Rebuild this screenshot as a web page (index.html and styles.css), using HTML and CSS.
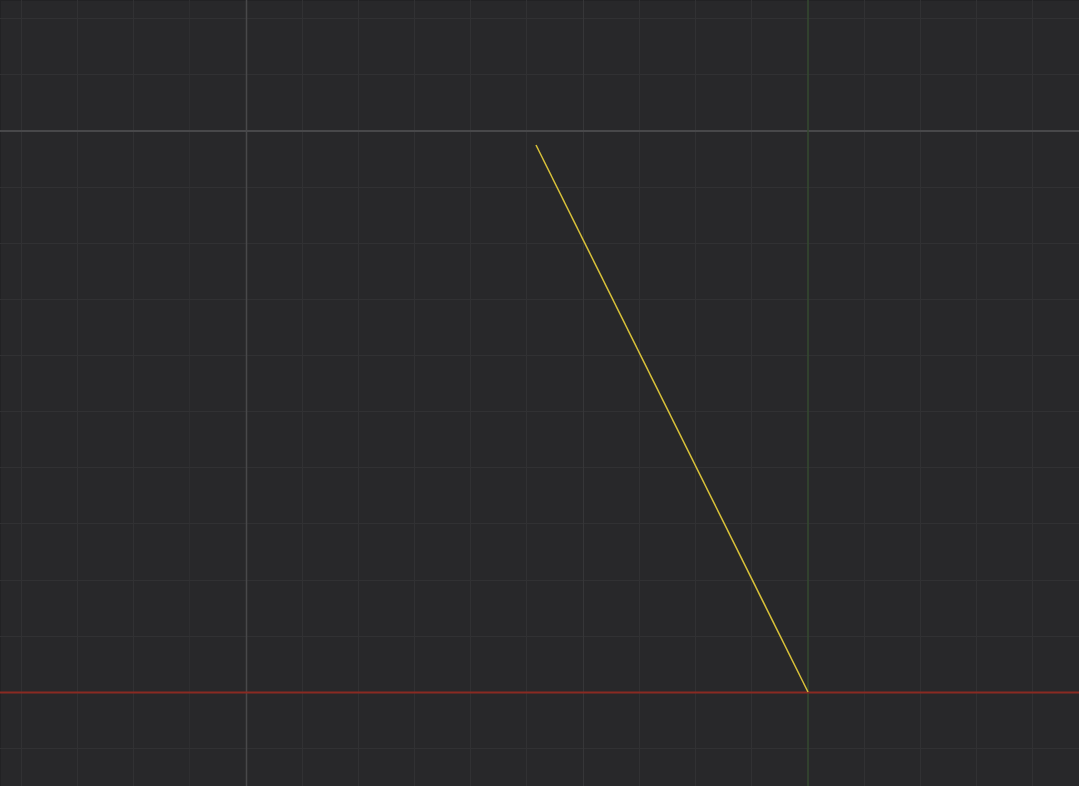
FILE: index.html
```html
<!DOCTYPE html>
<html lang="en">
<head>
    <meta charset="UTF-8">
    <meta name="viewport" content="width=device-width, initial-scale=1.0">
    <title>Graph Editor</title>
    <link rel="stylesheet" href="styles.css">
</head>
<body>
    <main class="graph-view">
        <svg class="graph-canvas" width="1079" height="786" viewBox="0 0 1079 786">
            <!-- minor grid -->
            <g class="grid-minor">
                <line x1="21.5" y1="0" x2="21.5" y2="786"/>
                <line x1="77.5" y1="0" x2="77.5" y2="786"/>
                <line x1="133.5" y1="0" x2="133.5" y2="786"/>
                <line x1="189.5" y1="0" x2="189.5" y2="786" class="faint"/>
                <line x1="302.5" y1="0" x2="302.5" y2="786"/>
                <line x1="358.5" y1="0" x2="358.5" y2="786"/>
                <line x1="414.5" y1="0" x2="414.5" y2="786"/>
                <line x1="470.5" y1="0" x2="470.5" y2="786"/>
                <line x1="526.5" y1="0" x2="526.5" y2="786"/>
                <line x1="639.5" y1="0" x2="639.5" y2="786"/>
                <line x1="695.5" y1="0" x2="695.5" y2="786"/>
                <line x1="751.5" y1="0" x2="751.5" y2="786"/>
                <line x1="864.5" y1="0" x2="864.5" y2="786"/>
                <line x1="920.5" y1="0" x2="920.5" y2="786"/>
                <line x1="976.5" y1="0" x2="976.5" y2="786"/>
                <line x1="1032.5" y1="0" x2="1032.5" y2="786"/>

                <line x1="0" y1="18.5" x2="1079" y2="18.5"/>
                <line x1="0" y1="74.5" x2="1079" y2="74.5"/>
                <line x1="0" y1="187.5" x2="1079" y2="187.5"/>
                <line x1="0" y1="243.5" x2="1079" y2="243.5"/>
                <line x1="0" y1="299.5" x2="1079" y2="299.5"/>
                <line x1="0" y1="355.5" x2="1079" y2="355.5"/>
                <line x1="0" y1="411.5" x2="1079" y2="411.5"/>
                <line x1="0" y1="467.5" x2="1079" y2="467.5"/>
                <line x1="0" y1="523.5" x2="1079" y2="523.5"/>
                <line x1="0" y1="580.5" x2="1079" y2="580.5"/>
                <line x1="0" y1="636.5" x2="1079" y2="636.5"/>
                <line x1="0" y1="748.5" x2="1079" y2="748.5"/>
            </g>

            <line class="grid-mid" x1="583.5" y1="0" x2="583.5" y2="786"/>

            <!-- origin lines -->
            <g class="grid-major">
                <line x1="246.5" y1="0" x2="246.5" y2="786"/>
                <line x1="0" y1="131" x2="1079" y2="131"/>
            </g>

            <!-- playhead and cursor value -->
            <line class="playhead" x1="808" y1="0" x2="808" y2="786"/>
            <line class="cursor-value" x1="0" y1="692.5" x2="1079" y2="692.5"/>

            <!-- f-curve -->
            <line class="fcurve" x1="536" y1="145" x2="808" y2="692"/>
        </svg>
    </main>
</body>
</html>
```

FILE: styles.css
```css
:root {
    --bg: #28282a;
    --grid: #313133;
    --grid-major: #48484a;
    --curve: #d9c23a;
}

* {
    margin: 0;
    padding: 0;
    box-sizing: border-box;
}

body {
    background-color: var(--bg);
    overflow: hidden;
}

.graph-view {
    width: 100vw;
    height: 100vh;
    border-top: 1px solid #222224;
    border-left: 1px solid #222224;
}

.graph-canvas {
    display: block;
    margin: -1px 0 0 -1px;
}

.grid-minor line {
    stroke: var(--grid);
    stroke-width: 1;
}

.grid-minor .faint {
    stroke: #2e2e30;
}

.grid-mid {
    stroke: #363638;
    stroke-width: 1;
}

.grid-major line {
    stroke: var(--grid-major);
    stroke-width: 2;
}

.grid-major line:first-child {
    stroke-width: 1.5;
}

.playhead {
    stroke: #344a30;
    stroke-width: 1.5;
}

.cursor-value {
    stroke: #8a2a22;
    stroke-width: 2;
}

.fcurve {
    stroke: var(--curve);
    stroke-width: 1.5;
}
```
